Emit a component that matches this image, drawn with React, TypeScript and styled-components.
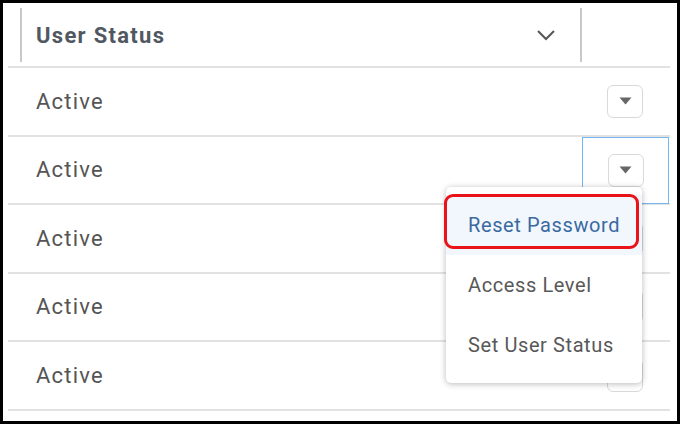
import React from "react";
import styled, { createGlobalStyle } from "styled-components";

const GlobalStyle = createGlobalStyle`
  body {
    margin: 0;
    font-family: Roboto, "Liberation Sans", sans-serif;
    background: #fff;
  }
`;

const Frame = styled.div`
  position: relative;
  width: 680px;
  height: 424px;
  box-sizing: border-box;
  border: 3px solid #000;
  background: #fff;
  overflow: hidden;
`;

const Table = styled.div`
  margin-left: 5px;
  width: 662px;
`;

const HeaderRow = styled.div`
  display: grid;
  grid-template-columns: 572px 90px;
  height: 65px;
  box-sizing: border-box;
  border-bottom: 2px solid #e2e2e2;
`;

const HeaderLabel = styled.div`
  display: flex;
  align-items: center;
  justify-content: space-between;
  margin: 5px 0 4px 12px;
  padding: 0 24px 0 14px;
  border-left: 2px solid #c9c9c9;
  font-size: 22px;
  font-weight: 700;
  color: #515861;
  letter-spacing: 1.3px;
`;

const HeaderBlank = styled.div`
  margin: 5px 0 4px 0;
  border-left: 2px solid #c9c9c9;
`;

const Row = styled.div`
  display: grid;
  grid-template-columns: 572px 90px;
  height: 68.5px;
  box-sizing: border-box;
  border-bottom: 2px solid #e2e2e2;
`;

const StatusCell = styled.div`
  display: flex;
  align-items: center;
  padding-left: 28px;
  font-size: 22px;
  color: #555;
  letter-spacing: 1.2px;
`;

const ActionCell = styled.div<{ $focused?: boolean }>`
  display: flex;
  align-items: center;
  justify-content: center;
  box-sizing: border-box;
  margin: ${({ $focused }) => ($focused ? "0 1px -1px 2px" : "0")};
  border: ${({ $focused }) => ($focused ? "1.5px solid #74b6f2" : "none")};
`;

const MenuButton = styled.button`
  display: flex;
  align-items: center;
  justify-content: center;
  width: 36px;
  height: 33px;
  padding: 0;
  background: #fff;
  border: 1.5px solid #d9d9d9;
  border-radius: 6px;
`;

const Menu = styled.div`
  position: absolute;
  left: 443px;
  top: 184px;
  width: 196px;
  padding: 8px 0;
  background: #fff;
  border-radius: 5px;
  box-shadow: 0 1px 6px rgba(0, 0, 0, 0.28);
`;

const MenuItem = styled.div<{ $active?: boolean }>`
  display: flex;
  align-items: center;
  height: 60px;
  padding-left: 22px;
  font-size: 20px;
  letter-spacing: 0.6px;
  color: ${({ $active }) => ($active ? "#3a6a9f" : "#585858")};
  background: ${({ $active }) => ($active ? "#f1f7fd" : "transparent")};
`;

const Callout = styled.div`
  position: absolute;
  left: 441px;
  top: 191px;
  width: 195px;
  height: 55px;
  box-sizing: border-box;
  border: 3.5px solid #e8141a;
  border-radius: 9px;
`;

const Chevron = () => (
  <svg width="20" height="12" viewBox="0 0 20 12">
    <path d="M2 2 L10 10 L18 2" fill="none" stroke="#555" strokeWidth="2" />
  </svg>
);

const Caret = () => (
  <svg width="13" height="8" viewBox="0 0 13 8">
    <path d="M0.5 0.5 H12.5 L6.5 7.5 Z" fill="#666" />
  </svg>
);

const rows = ["Active", "Active", "Active", "Active", "Active"];

export default function App() {
  return (
    <>
      <GlobalStyle />
      <Frame>
        <Table>
          <HeaderRow>
            <HeaderLabel>
              <span>User Status</span>
              <Chevron />
            </HeaderLabel>
            <HeaderBlank />
          </HeaderRow>
          {rows.map((status, i) => (
            <Row key={i}>
              <StatusCell>{status}</StatusCell>
              <ActionCell $focused={i === 1}>
                <MenuButton>
                  <Caret />
                </MenuButton>
              </ActionCell>
            </Row>
          ))}
        </Table>
        <Menu>
          <MenuItem $active>Reset Password</MenuItem>
          <MenuItem>Access Level</MenuItem>
          <MenuItem>Set User Status</MenuItem>
        </Menu>
        <Callout />
      </Frame>
    </>
  );
}
